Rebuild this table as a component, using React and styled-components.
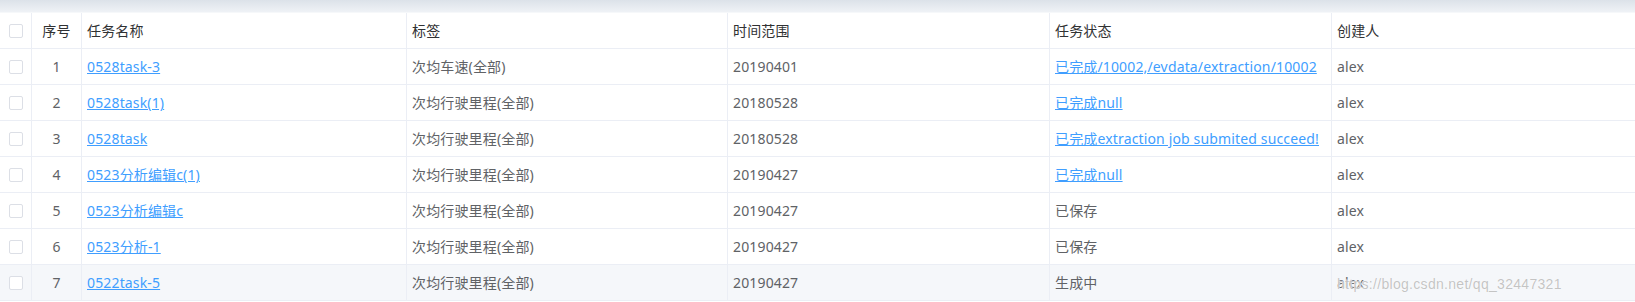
import styled, { createGlobalStyle } from "styled-components";

const GlobalStyle = createGlobalStyle`
  html, body {
    margin: 0;
    padding: 0;
    background: #ffffff;
  }
  body {
    font-family: "Noto Sans", "Noto Sans CJK SC", sans-serif;
    font-size: 14px;
  }
`;

const Page = styled.div`
  position: relative;
  width: 1635px;
  height: 302px;
  overflow: hidden;
  background: #ffffff;
`;

const TopShade = styled.div`
  height: 13px;
  background: linear-gradient(#dce2e9, #eff2f6);
  border-bottom: 1px solid #f6f8fa;
  box-sizing: border-box;
`;

const Table = styled.div`
  display: flex;
  flex-direction: column;
`;

const Row = styled.div`
  display: grid;
  grid-template-columns: 32px 50px 325px 321px 322px 282px 1fr;
  height: 36px;
  border-bottom: 1px solid #ebeef5;
  box-sizing: border-box;
  background: ${(p) => (p.$hover ? "#f5f7fa" : "#ffffff")};
`;

const Cell = styled.div`
  display: flex;
  align-items: center;
  justify-content: ${(p) => (p.$center ? "center" : "flex-start")};
  padding: 1px ${(p) => (p.$center ? "0" : "5px")} 0;
  border-right: 1px solid #ebeef5;
  color: ${(p) => (p.$head ? "#303133" : "#606266")};
  white-space: nowrap;
  overflow: hidden;
  line-height: 20px;
  letter-spacing: 0.15px;

  &:last-child {
    border-right: none;
  }
`;

const Check = styled.span`
  display: inline-block;
  width: 14px;
  height: 14px;
  box-sizing: border-box;
  border: 1px solid #dcdfe6;
  border-radius: 2px;
  background: #ffffff;
`;

const Link = styled.a`
  color: #409eff;
  text-decoration: underline;
  cursor: pointer;
`;

const Watermark = styled.div`
  position: absolute;
  left: 1337px;
  top: 276px;
  font-family: "Liberation Sans", Arial, sans-serif;
  font-size: 14px;
  color: rgba(170, 170, 170, 0.7);
  text-shadow: 0 0 1px #ffffff, 0 0 1px #ffffff;
  letter-spacing: 0.3px;
  pointer-events: none;
`;

const rows = [
  { name: "0528task-3", tag: "次均车速(全部)", time: "20190401", status: "已完成/10002,/evdata/extraction/10002", done: true },
  { name: "0528task(1)", tag: "次均行驶里程(全部)", time: "20180528", status: "已完成null", done: true },
  { name: "0528task", tag: "次均行驶里程(全部)", time: "20180528", status: "已完成extraction job submited succeed!", done: true },
  { name: "0523分析编辑c(1)", tag: "次均行驶里程(全部)", time: "20190427", status: "已完成null", done: true },
  { name: "0523分析编辑c", tag: "次均行驶里程(全部)", time: "20190427", status: "已保存", done: false },
  { name: "0523分析-1", tag: "次均行驶里程(全部)", time: "20190427", status: "已保存", done: false },
  { name: "0522task-5", tag: "次均行驶里程(全部)", time: "20190427", status: "生成中", done: false },
];

export default function App() {
  return (
    <>
      <GlobalStyle />
      <Page>
        <TopShade />
        <Table>
          <Row>
            <Cell $center><Check /></Cell>
            <Cell $center $head>序号</Cell>
            <Cell $head>任务名称</Cell>
            <Cell $head>标签</Cell>
            <Cell $head>时间范围</Cell>
            <Cell $head>任务状态</Cell>
            <Cell $head>创建人</Cell>
          </Row>
          {rows.map((r, i) => (
            <Row key={i} $hover={i === rows.length - 1}>
              <Cell $center><Check /></Cell>
              <Cell $center>{i + 1}</Cell>
              <Cell><Link>{r.name}</Link></Cell>
              <Cell>{r.tag}</Cell>
              <Cell>{r.time}</Cell>
              <Cell>{r.done ? <Link>{r.status}</Link> : r.status}</Cell>
              <Cell>alex</Cell>
            </Row>
          ))}
        </Table>
        <Watermark>https://blog.csdn.net/qq_32447321</Watermark>
      </Page>
    </>
  );
}
